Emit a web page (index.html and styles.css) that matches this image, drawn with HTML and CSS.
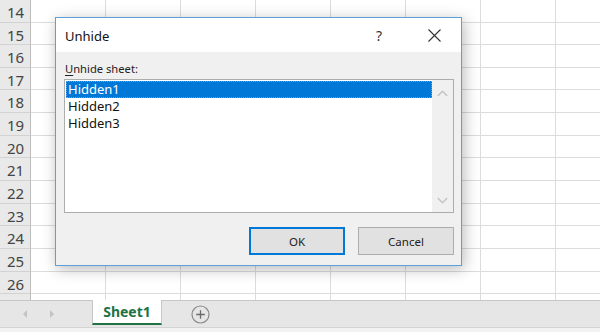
FILE: index.html
```html
<!DOCTYPE html>
<html>
<head>
<meta charset="utf-8">
<link rel="stylesheet" href="styles.css">
</head>
<body>
<div class="app">
  <div class="sheet">
    <div class="row first"><div class="rh">14</div><div class="cells"></div></div>
    <div class="row"><div class="rh">15</div><div class="cells"></div></div>
    <div class="row"><div class="rh">16</div><div class="cells"></div></div>
    <div class="row"><div class="rh">17</div><div class="cells"></div></div>
    <div class="row"><div class="rh">18</div><div class="cells"></div></div>
    <div class="row"><div class="rh">19</div><div class="cells"></div></div>
    <div class="row"><div class="rh">20</div><div class="cells"></div></div>
    <div class="row"><div class="rh">21</div><div class="cells"></div></div>
    <div class="row"><div class="rh">22</div><div class="cells"></div></div>
    <div class="row"><div class="rh">23</div><div class="cells"></div></div>
    <div class="row"><div class="rh">24</div><div class="cells"></div></div>
    <div class="row"><div class="rh">25</div><div class="cells"></div></div>
    <div class="row"><div class="rh">26</div><div class="cells"></div></div>
    <div class="row last"><div class="rh"></div><div class="cells"></div></div>
  </div>
  <div class="tabbar">
    <div class="nav">
      <span class="arrow left"></span>
      <span class="arrow right"></span>
    </div>
    <div class="tab">Sheet1</div>
    <div class="add">
      <svg width="19" height="19" viewBox="0 0 19 19"><circle cx="9.5" cy="9.5" r="8.5" fill="none" stroke="#8a8a8a" stroke-width="1.2"/><path d="M9.5 5.2v8.6M5.2 9.5h8.6" stroke="#6a6a6a" stroke-width="1.3"/></svg>
    </div>
  </div>
  <div class="status"></div>

  <div class="dialog">
    <div class="titlebar">
      <span class="title">Unhide</span>
      <span class="help">?</span>
      <span class="close">
        <svg width="13" height="13" viewBox="0 0 13 13"><path d="M0.5 0.5L12.5 12.5M12.5 0.5L0.5 12.5" stroke="#333" stroke-width="1.1"/></svg>
      </span>
    </div>
    <div class="body">
      <div class="label"><u>U</u>nhide sheet:</div>
      <div class="listbox">
        <div class="items">
          <div class="item selected">Hidden1</div>
          <div class="item">Hidden2</div>
          <div class="item">Hidden3</div>
        </div>
        <div class="scroll">
          <svg width="11" height="7" viewBox="0 0 11 7"><path d="M0.8 6L5.5 1.3L10.2 6" fill="none" stroke="#c4c4c4" stroke-width="1.6"/></svg>
          <svg width="11" height="7" viewBox="0 0 11 7"><path d="M0.8 1L5.5 5.7L10.2 1" fill="none" stroke="#c4c4c4" stroke-width="1.6"/></svg>
        </div>
      </div>
      <div class="buttons">
        <div class="btn default">OK</div>
        <div class="btn">Cancel</div>
      </div>
    </div>
  </div>
</div>
</body>
</html>
```

FILE: styles.css
```css
html, body {
  margin: 0;
  padding: 0;
}
body {
  width: 600px;
  height: 332px;
  overflow: hidden;
  background: #ffffff;
  font-family: "Noto Sans", "Open Sans", sans-serif;
}
.app {
  position: relative;
  width: 600px;
  height: 332px;
  display: flex;
  flex-direction: column;
}
.sheet {
  height: 300px;
  display: flex;
  flex-direction: column;
  overflow: hidden;
}
.row {
  display: flex;
  height: 22.67px;
  flex: none;
}
.row.first {
  height: 22.5px;
}
.row.last {
  flex: 1;
}
.rh {
  flex: none;
  background: #e9e9e9;
  border-right: 1px solid #bdbdbd;
  border-bottom: 1px solid #d2d2d2;
  box-sizing: border-box;
  width: 31px;
  color: #444;
  font-size: 15px;
  line-height: 24px;
  text-align: center;
  padding-left: 1px;
}
.row.last .rh {
  border-bottom: none;
}
.cells {
  flex: 1;
  border-bottom: 1px solid #dcdcdc;
  background-image: repeating-linear-gradient(to right, transparent 0, transparent 74px, #dcdcdc 74px, #dcdcdc 75px);
}
.row.last .cells {
  border-bottom: none;
}

.tabbar {
  height: 27px;
  flex: none;
  box-sizing: border-box;
  border-top: 1px solid #c6c6c6;
  background: #e6e6e6;
  display: flex;
  align-items: stretch;
}
.nav {
  width: 92px;
  display: flex;
  align-items: center;
  padding-left: 23px;
  gap: 23px;
  box-sizing: border-box;
}
.arrow {
  width: 0;
  height: 0;
  border-top: 4px solid transparent;
  border-bottom: 4px solid transparent;
}
.arrow.left {
  border-right: 4px solid #c3c3c3;
}
.arrow.right {
  border-left: 4px solid #c3c3c3;
}
.tab {
  width: 70px;
  box-sizing: border-box;
  margin-top: -1px;
  margin-bottom: 2px;
  background: #ffffff;
  border-left: 1px solid #c6c6c6;
  border-right: 1px solid #c6c6c6;
  border-bottom: 2px solid #217346;
  color: #217346;
  font-weight: bold;
  font-size: 14px;
  display: flex;
  align-items: center;
  justify-content: center;
  padding-bottom: 1px;
}
.add {
  margin-left: 29px;
  display: flex;
  align-items: center;
  padding-top: 1px;
}
.status {
  flex: 1;
  border-top: 1px solid #d4d4d4;
  background: #f3f3f3;
}

.dialog {
  position: absolute;
  left: 55px;
  top: 17px;
  width: 407px;
  height: 249px;
  box-sizing: border-box;
  border: 1px solid #5d9fda;
  background: #f0f0f0;
  box-shadow: 2px 3px 14px rgba(0, 0, 0, 0.28);
  display: flex;
  flex-direction: column;
}
.titlebar {
  height: 34px;
  flex: none;
  background: #ffffff;
  display: flex;
  align-items: center;
  padding-left: 9px;
  padding-top: 1px;
  box-sizing: border-box;
}
.title {
  font-size: 13px;
  color: #111;
  flex: 1;
}
.help {
  font-size: 14px;
  color: #333;
  width: 12px;
  text-align: center;
  margin-right: 43px;
}
.close {
  display: flex;
  margin-right: 20px;
}
.body {
  flex: 1;
  display: flex;
  flex-direction: column;
  padding: 9px 7px 0 8px;
}
.label {
  font-size: 11.2px;
  color: #222;
  line-height: 16px;
  margin-left: 1px;
}
.label u {
  text-decoration-thickness: 1px;
  text-underline-offset: 2px;
}
.listbox {
  margin-top: 2px;
  height: 134px;
  box-sizing: border-box;
  border: 1px solid #adadad;
  background: #ffffff;
  display: flex;
}
.items {
  flex: 1;
  padding: 1px 0 0 1px;
}
.item {
  font-size: 13px;
  line-height: 17px;
  height: 17px;
  color: #111;
  padding-left: 2px;
}
.item.selected {
  background: #0078d7;
  color: #ffffff;
  outline: 1px dotted #5fa3e6;
  outline-offset: -1px;
}
.scroll {
  width: 21px;
  background: #f0f0f0;
  display: flex;
  flex-direction: column;
  justify-content: space-between;
  align-items: center;
  padding: 10px 0 8px;
}
.buttons {
  display: flex;
  justify-content: flex-end;
  gap: 13px;
  margin-top: 14px;
}
.btn {
  width: 96px;
  height: 28px;
  box-sizing: border-box;
  border: 1px solid #adadad;
  background: #e1e1e1;
  font-size: 11.5px;
  color: #222;
  display: flex;
  align-items: center;
  justify-content: center;
}
.btn.default {
  border: 1px solid #0078d7;
  box-shadow: inset 0 0 0 1px #0078d7;
}
```
